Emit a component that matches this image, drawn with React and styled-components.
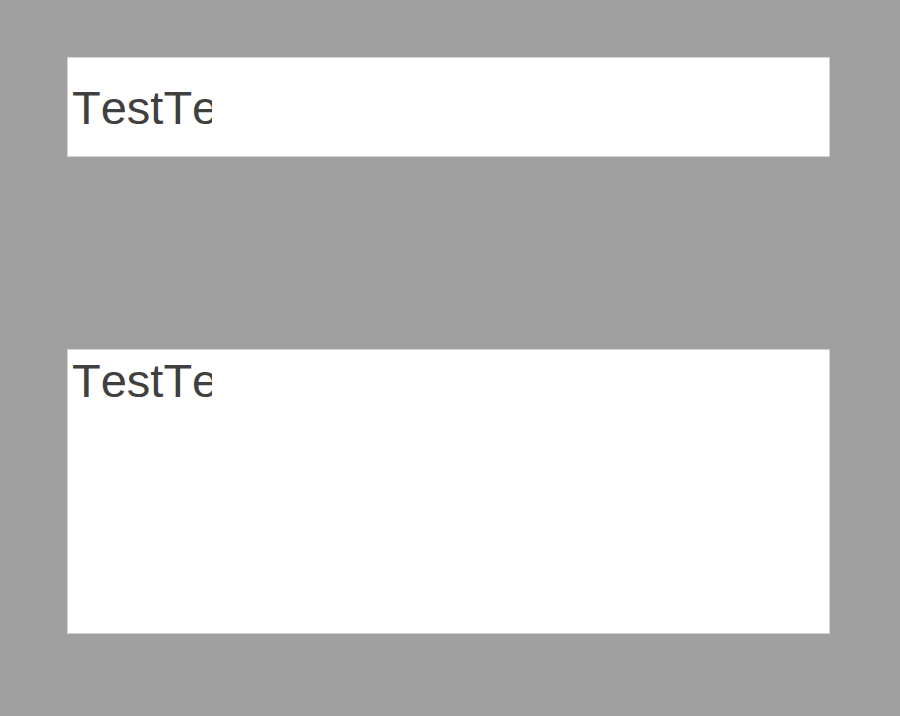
import React from 'react'
import styled, { createGlobalStyle } from 'styled-components'

const GlobalStyle = createGlobalStyle`
	html, body {
		margin: 0;
		padding: 0;
		background: #a0a0a0;
	}
`

const Page = styled.div`
	width: 900px;
	height: 716px;
	box-sizing: border-box;
	padding: 57px 70px 0 67px;
	display: flex;
	flex-direction: column;
	gap: 192px;
`

const Field = styled.div`
	box-sizing: border-box;
	height: ${(p) => p.height}px;
	background: #fff;
	border: 1px solid #d2d2d2;
	padding: 0 4px;
	display: flex;
	align-items: ${(p) => (p.multiline ? 'flex-start' : 'center')};
	padding-top: ${(p) => (p.multiline ? 3 : 0)}px;
	font-family: 'Liberation Sans', Arial, sans-serif;
	font-size: 47px;
	font-kerning: none;
	color: #404040;
`

const Clip = styled.span`
	display: block;
	width: 140px;
	overflow: hidden;
	white-space: nowrap;
`

function App() {
	return (
		<>
			<GlobalStyle />
			<Page>
				<Field height={100}>
					<Clip>TestTest</Clip>
				</Field>
				<Field height={285} multiline>
					<Clip>TestTest</Clip>
				</Field>
			</Page>
		</>
	)
}

export default App
